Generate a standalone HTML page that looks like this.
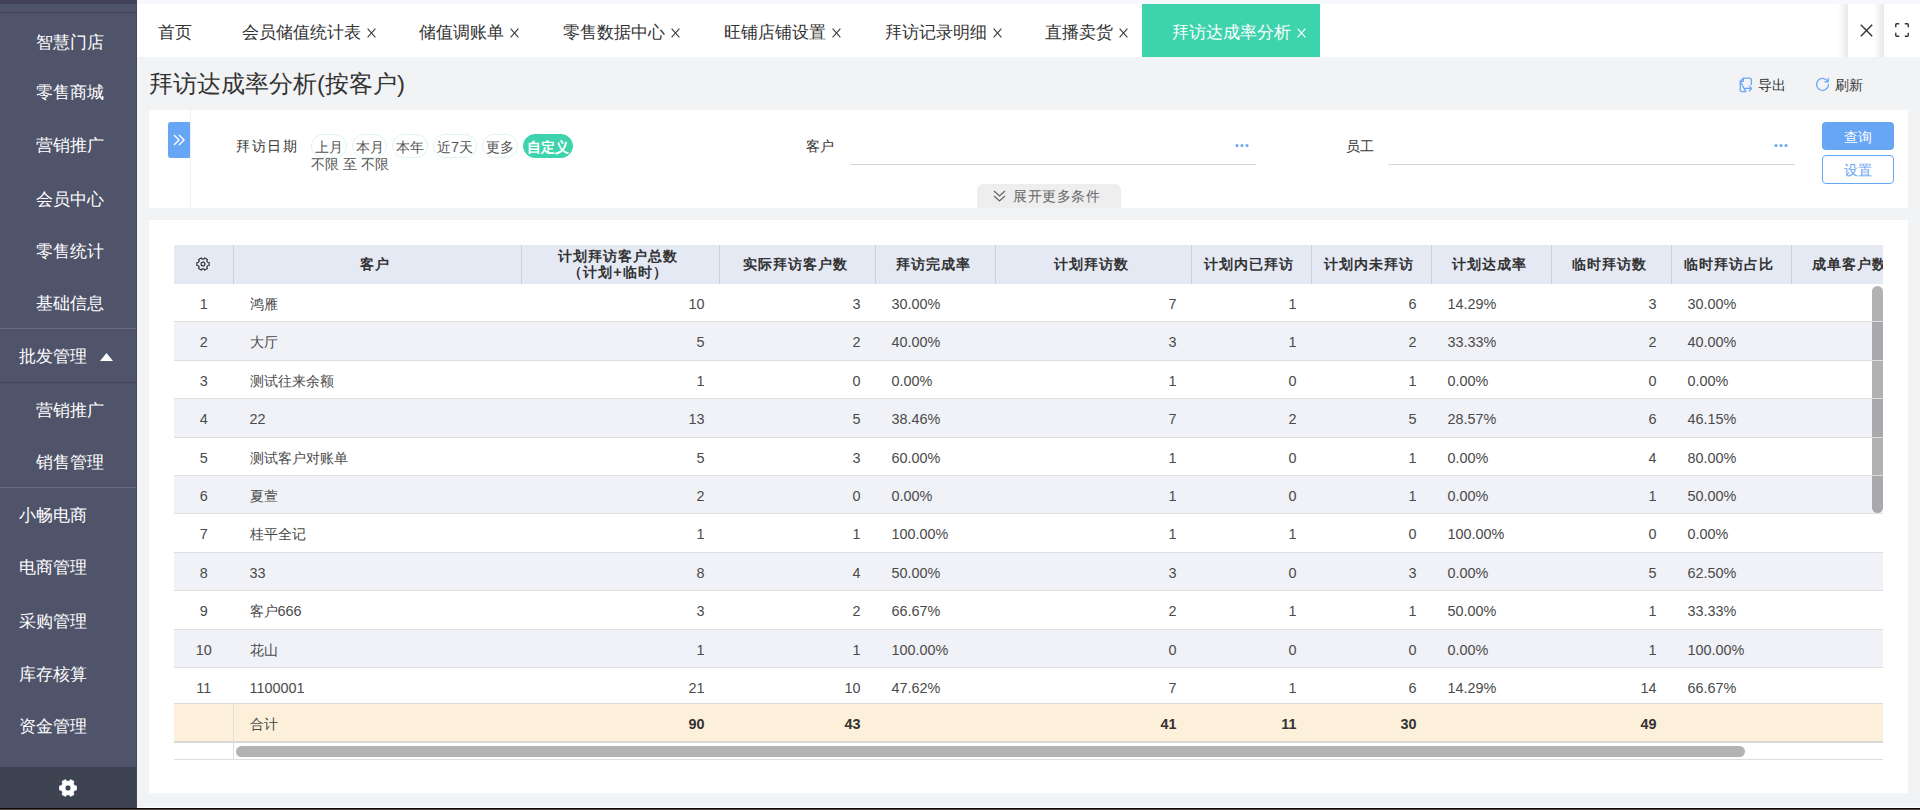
<!DOCTYPE html>
<html><head><meta charset="utf-8">
<style>
*{box-sizing:border-box;margin:0;padding:0}
html,body{width:1920px;height:810px;overflow:hidden;background:#f2f3f5;font-family:"Liberation Sans",sans-serif;color:#333}
.abs{position:absolute}
/* sidebar */
#side{position:absolute;left:0;top:0;width:137px;height:808px;background:#50546a}
#side .topband{position:absolute;left:0;top:0;width:137px;height:4px;background:#41425a}
#side .topline{position:absolute;left:0;top:12px;width:137px;height:1px;background:#3f4252}
#side .edge{position:absolute;left:136px;top:0;width:1px;height:808px;background:#454859}
.mi{position:absolute;color:#fff;font-size:16.8px;line-height:22px;white-space:nowrap;font-weight:500}
.sep{position:absolute;left:0;width:137px;height:1px}
#side .bottom{position:absolute;left:0;top:767px;width:137px;height:41px;background:#3e4352}
#btmline{position:absolute;left:0;top:808px;width:1920px;height:1px;background:#0a0a0a}
#btmline2{position:absolute;left:0;top:809px;width:1920px;height:1px;background:#4b463f}
#whiteline{position:absolute;left:137px;top:807px;width:1783px;height:1px;background:#fff}
/* tabs */
#topstrip{position:absolute;left:138px;top:0;width:1782px;height:4px;background:#f7f8fb}
#tabbar{position:absolute;left:137px;top:4px;width:1783px;height:53px;background:#fff}
.tab{position:absolute;top:4px;height:53px;line-height:57px;font-size:16.8px;color:#333;white-space:nowrap}
.tab .x{display:inline-block;width:9px;height:10px;margin-left:6px;vertical-align:0px}
.tab.active{background:#3dd3ad;color:#fff}
.gbtn{position:absolute;top:4px;width:36px;height:53px;background:#fff}
.gbtn::before{content:'';position:absolute;left:-10px;top:0;width:10px;height:53px;background:linear-gradient(to right,rgba(0,0,0,0),rgba(0,0,0,0.09))}
/* title */
#title{position:absolute;left:149px;top:69px;font-size:24px;line-height:30px;color:#333;white-space:nowrap}
.tool{position:absolute;top:75px;font-size:14.4px;line-height:20px;color:#333;white-space:nowrap}
/* filter card */
#fcard{position:absolute;left:149px;top:110px;width:1759px;height:98px;background:#fff}
#fdiv{position:absolute;left:190px;top:110px;width:1px;height:98px;background:#eef0f3}
#expbtn{position:absolute;left:168px;top:122px;width:22px;height:36px;background:#67a5f5;border-radius:3px 0 0 3px}
.lbl{position:absolute;font-size:14.4px;line-height:20px;color:#333;white-space:nowrap}
.pill{position:absolute;top:134px;height:24px;border:1px solid #dcf5ee;border-radius:12px;font-size:14.4px;line-height:24px;color:#555;text-align:center;white-space:nowrap}
.pill.on{background:#3dd3ad;border-color:#3dd3ad;color:#fff;font-weight:bold}
.uline{position:absolute;top:164px;height:1px;background:#d6d6d6}
.dots{position:absolute;top:143px;width:14px;height:5px}
.btn{position:absolute;left:1822px;width:72px;border-radius:4px;font-size:14.4px;text-align:center}
#moretab{position:absolute;left:977px;top:184px;width:144px;height:24px;background:#eeeeee;border-radius:6px 6px 0 0;font-size:14.4px;line-height:24px;color:#666;white-space:nowrap;letter-spacing:0.5px}
/* table card */
#tcard{position:absolute;left:149px;top:220px;width:1759px;height:573px;background:#fff}
.thead{position:absolute;left:174px;top:245px;width:1709px;height:38.5px;background:#e5e9f4;overflow:hidden}
.hc{position:absolute;top:245px;height:38.5px;line-height:38.5px;text-align:center;font-size:14.4px;font-weight:bold;color:#333;white-space:nowrap;border-right:1px solid #cdd0d6;letter-spacing:1px;padding-right:4px}
.hc.two{line-height:16px;padding-top:3px}
.tr{position:absolute;left:174px;width:1709px;background:#fff}
.rb{position:absolute;left:174px;width:1709px;height:1px;background:#dedede;z-index:1}
.tr.z{background:#f0f2f7}
.c{position:absolute;font-size:14.4px;color:#4a4a4a;white-space:nowrap;overflow:hidden}
.c.c{text-align:center}
.c.l{text-align:left;padding-left:16px}
.c.r{text-align:right;padding-right:15px}
.c.b{font-weight:bold;color:#333}
.sumrow{position:absolute;left:174px;top:702.8px;width:1709px;height:38.5px;background:#fdf0da;border-top:1px solid #dcdcdc}
#clip{position:absolute;left:0;top:0;width:1883px;height:810px;overflow:hidden}
</style></head><body>

<!-- sidebar -->
<div id="side">
  <div class="topband"></div>
  <div class="topline"></div>
  <div class="mi" style="left:36px;top:32px">智慧门店</div>
  <div class="mi" style="left:36px;top:82px">零售商城</div>
  <div class="mi" style="left:36px;top:135px">营销推广</div>
  <div class="mi" style="left:36px;top:189px">会员中心</div>
  <div class="mi" style="left:36px;top:241px">零售统计</div>
  <div class="mi" style="left:36px;top:293px">基础信息</div>
  <div class="sep" style="top:328px;background:#686c7e"></div>
  <div class="mi" style="left:19px;top:346px">批发管理</div>
  <svg class="abs" style="left:100px;top:352.5px" width="13" height="8" viewBox="0 0 13 8"><path d="M6.5 0 L13 8 L0 8 Z" fill="#fff"/></svg>
  <div class="sep" style="top:382px;background:#43465a"></div>
  <div class="mi" style="left:36px;top:400px">营销推广</div>
  <div class="mi" style="left:36px;top:452px">销售管理</div>
  <div class="sep" style="top:487px;background:#686c7e"></div>
  <div class="mi" style="left:19px;top:505px">小畅电商</div>
  <div class="mi" style="left:19px;top:557px">电商管理</div>
  <div class="mi" style="left:19px;top:611px">采购管理</div>
  <div class="mi" style="left:19px;top:664px">库存核算</div>
  <div class="mi" style="left:19px;top:716px">资金管理</div>
  <div class="bottom"></div>
  <svg class="abs" style="left:59px;top:779.4px" width="18" height="18" viewBox="0 0 18 18"><path fill="#fff" fill-rule="evenodd" stroke="#fff" stroke-width="0.6" stroke-linejoin="round" d="M15.40 6.42 L17.67 7.00 L17.67 11.00 L15.40 11.58 L14.44 13.25 L15.07 15.51 L11.60 17.51 L9.96 15.83 L8.04 15.83 L6.40 17.51 L2.93 15.51 L3.56 13.25 L2.60 11.58 L0.33 11.00 L0.33 7.00 L2.60 6.42 L3.56 4.75 L2.93 2.49 L6.40 0.49 L8.04 2.17 L9.96 2.17 L11.60 0.49 L15.07 2.49 L14.44 4.75Z M11.9 9 A2.9 2.9 0 1 0 11.9 9.01Z"/></svg>
  <div class="edge"></div>
</div>

<!-- tabs -->
<div id="topstrip"></div>
<div id="tabbar"></div>
<div class="tab" style="left:158px">首页</div>
<div class="tab" style="left:242px">会员储值统计表<svg class="x" viewBox="0 0 9 10"><path d="M0.6 0.6L8.4 9.4M8.4 0.6L0.6 9.4" stroke="#444" stroke-width="1.2"/></svg></div>
<div class="tab" style="left:419px">储值调账单<svg class="x" viewBox="0 0 9 10"><path d="M0.6 0.6L8.4 9.4M8.4 0.6L0.6 9.4" stroke="#444" stroke-width="1.2"/></svg></div>
<div class="tab" style="left:563px">零售数据中心<svg class="x" viewBox="0 0 9 10"><path d="M0.6 0.6L8.4 9.4M8.4 0.6L0.6 9.4" stroke="#444" stroke-width="1.2"/></svg></div>
<div class="tab" style="left:724px">旺铺店铺设置<svg class="x" viewBox="0 0 9 10"><path d="M0.6 0.6L8.4 9.4M8.4 0.6L0.6 9.4" stroke="#444" stroke-width="1.2"/></svg></div>
<div class="tab" style="left:885px">拜访记录明细<svg class="x" viewBox="0 0 9 10"><path d="M0.6 0.6L8.4 9.4M8.4 0.6L0.6 9.4" stroke="#444" stroke-width="1.2"/></svg></div>
<div class="tab" style="left:1045px">直播卖货<svg class="x" viewBox="0 0 9 10"><path d="M0.6 0.6L8.4 9.4M8.4 0.6L0.6 9.4" stroke="#444" stroke-width="1.2"/></svg></div>
<div class="tab active" style="left:1142px;width:178px;padding-left:30px">拜访达成率分析<svg class="x" viewBox="0 0 9 10"><path d="M0.6 0.6L8.4 9.4M8.4 0.6L0.6 9.4" stroke="#fff" stroke-width="1.2"/></svg></div>
<div class="gbtn" style="left:1848px"><svg class="abs" style="left:12px;top:20px" width="13" height="13" viewBox="0 0 13 13"><path d="M0.8 0.8L12.2 12.2M12.2 0.8L0.8 12.2" stroke="#333" stroke-width="1.4"/></svg></div>
<div class="gbtn" style="left:1884px"><svg class="abs" style="left:11px;top:19px" width="14" height="14" viewBox="0 0 15 15"><path d="M0.8 4.5V1.8a1 1 0 0 1 1-1H4.5 M10.5 0.8h2.7a1 1 0 0 1 1 1V4.5 M14.2 10.5v2.7a1 1 0 0 1-1 1H10.5 M4.5 14.2H1.8a1 1 0 0 1-1-1V10.5" fill="none" stroke="#333" stroke-width="1.5"/></svg></div>

<!-- title -->
<div id="title">拜访达成率分析(按客户)</div>
<svg class="abs" style="left:1739px;top:77px" width="14" height="16" viewBox="0 0 14 16"><path d="M4.3 1.2H10.6A1.8 1.8 0 0 1 12.4 3V7.6 M6.8 14.6H3A1.8 1.8 0 0 1 1.2 12.8V4.3Z M1.2 4.3L4.3 1.2V4.3Z M6 11.4H12.6 M10.4 9.1L12.7 11.4L10.4 13.7" fill="none" stroke="#6aa7f6" stroke-width="1.3" stroke-linejoin="round" stroke-linecap="round"/></svg>
<div class="tool" style="left:1758px;top:75px">导出</div>
<svg class="abs" style="left:1815px;top:77px" width="15" height="15" viewBox="0 0 15 15"><path d="M12.6 4.2A6 6 0 1 0 13.5 7.5" fill="none" stroke="#6aa7f6" stroke-width="1.3" stroke-linecap="round"/><path d="M13.2 1.3V4.8H9.8" fill="none" stroke="#6aa7f6" stroke-width="1.3" stroke-linecap="round" stroke-linejoin="round"/></svg>
<div class="tool" style="left:1835px;top:75px">刷新</div>

<!-- filter card -->
<div id="fcard"></div>
<div id="fdiv"></div>
<div id="expbtn"><svg class="abs" style="left:4px;top:11px" width="14" height="14" viewBox="0 0 14 14"><path d="M2 2L7 7L2 12M7 2L12 7L7 12" fill="none" stroke="#fff" stroke-width="1.4"/></svg></div>
<div class="lbl" style="left:236px;top:136px;letter-spacing:1.5px">拜访日期</div>
<div class="pill" style="left:311px;width:36px">上月</div>
<div class="pill" style="left:352px;width:35px">本月</div>
<div class="pill" style="left:392px;width:36px">本年</div>
<div class="pill" style="left:433px;width:44px">近7天</div>
<div class="pill" style="left:482px;width:36px">更多</div>
<div class="pill on" style="left:523px;width:50px">自定义</div>
<div class="lbl" style="left:311px;top:154px;color:#555">不限 至 不限</div>
<div class="lbl" style="left:806px;top:136px">客户</div>
<div class="uline" style="left:850px;width:406px"></div>
<svg class="dots" style="left:1235px" viewBox="0 0 14 5"><circle cx="2" cy="2.5" r="1.5" fill="#67a5f5"/><circle cx="7" cy="2.5" r="1.5" fill="#67a5f5"/><circle cx="12" cy="2.5" r="1.5" fill="#67a5f5"/></svg>
<div class="lbl" style="left:1346px;top:136px">员工</div>
<div class="uline" style="left:1388px;width:407px"></div>
<svg class="dots" style="left:1774px" viewBox="0 0 14 5"><circle cx="2" cy="2.5" r="1.5" fill="#67a5f5"/><circle cx="7" cy="2.5" r="1.5" fill="#67a5f5"/><circle cx="12" cy="2.5" r="1.5" fill="#67a5f5"/></svg>
<div class="btn" style="top:122px;height:28px;line-height:30px;background:#67a5f5;color:#fff">查询</div>
<div class="btn" style="top:155px;height:29px;line-height:29px;border:1px solid #67a5f5;color:#67a5f5;background:#fff">设置</div>
<div id="moretab"><svg class="abs" style="left:16px;top:6px" width="13" height="12" viewBox="0 0 13 12"><path d="M1 1L6.5 6L12 1M1 6L6.5 11L12 6" fill="none" stroke="#666" stroke-width="1.2"/></svg><span class="abs" style="left:36px;top:0">展开更多条件</span></div>

<!-- table card -->
<div id="tcard"></div>
<div id="clip">
<div class="thead"></div><div class="hc" style="left:174px;width:59.5px"></div><svg style="position:absolute;left:195.2px;top:255.8px" width="16" height="16" viewBox="0 0 16 16"><path d="M12.57 6.24 L14.11 6.48 L14.11 9.52 L12.57 9.76 L11.81 11.08 L12.38 12.53 L9.74 14.06 L8.77 12.84 L7.23 12.84 L6.26 14.06 L3.62 12.53 L4.19 11.08 L3.43 9.76 L1.89 9.52 L1.89 6.48 L3.43 6.24 L4.19 4.92 L3.62 3.47 L6.26 1.94 L7.23 3.16 L8.77 3.16 L9.74 1.94 L12.38 3.47 L11.81 4.92Z" fill="none" stroke="#333" stroke-width="1.2" stroke-linejoin="round"/><circle cx="8" cy="8" r="1.9" fill="none" stroke="#333" stroke-width="1.2"/></svg><div class="hc" style="left:233.5px;width:288.0px">客户</div><div class="hc two" style="left:521.5px;width:198.0px">计划拜访客户总数<br>（计划+临时）</div><div class="hc" style="left:719.5px;width:156.0px">实际拜访客户数</div><div class="hc" style="left:875.5px;width:120.0px">拜访完成率</div><div class="hc" style="left:995.5px;width:196.0px">计划拜访数</div><div class="hc" style="left:1191.5px;width:120.0px">计划内已拜访</div><div class="hc" style="left:1311.5px;width:120.0px">计划内未拜访</div><div class="hc" style="left:1431.5px;width:120.0px">计划达成率</div><div class="hc" style="left:1551.5px;width:120.0px">临时拜访数</div><div class="hc" style="left:1671.5px;width:120.0px">临时拜访占比</div><div class="hc" style="left:1791.5px;width:120.0px">成单客户数</div>
<div class="tr " style="top:283.5px;height:38.4px"></div><div class="rb" style="top:321.4px"></div><div class="c c " style="left:174px;width:59.5px;top:285.0px;height:38.4px;line-height:38.4px">1</div><div class="c l " style="left:233.5px;width:288.0px;top:285.0px;height:38.4px;line-height:38.4px">鸿雁</div><div class="c r " style="left:521.5px;width:198.0px;top:285.0px;height:38.4px;line-height:38.4px">10</div><div class="c r " style="left:719.5px;width:156.0px;top:285.0px;height:38.4px;line-height:38.4px">3</div><div class="c l " style="left:875.5px;width:120.0px;top:285.0px;height:38.4px;line-height:38.4px">30.00%</div><div class="c r " style="left:995.5px;width:196.0px;top:285.0px;height:38.4px;line-height:38.4px">7</div><div class="c r " style="left:1191.5px;width:120.0px;top:285.0px;height:38.4px;line-height:38.4px">1</div><div class="c r " style="left:1311.5px;width:120.0px;top:285.0px;height:38.4px;line-height:38.4px">6</div><div class="c l " style="left:1431.5px;width:120.0px;top:285.0px;height:38.4px;line-height:38.4px">14.29%</div><div class="c r " style="left:1551.5px;width:120.0px;top:285.0px;height:38.4px;line-height:38.4px">3</div><div class="c l " style="left:1671.5px;width:120.0px;top:285.0px;height:38.4px;line-height:38.4px">30.00%</div><div class="tr z" style="top:321.9px;height:38.4px"></div><div class="rb" style="top:359.8px"></div><div class="c c " style="left:174px;width:59.5px;top:323.4px;height:38.4px;line-height:38.4px">2</div><div class="c l " style="left:233.5px;width:288.0px;top:323.4px;height:38.4px;line-height:38.4px">大厅</div><div class="c r " style="left:521.5px;width:198.0px;top:323.4px;height:38.4px;line-height:38.4px">5</div><div class="c r " style="left:719.5px;width:156.0px;top:323.4px;height:38.4px;line-height:38.4px">2</div><div class="c l " style="left:875.5px;width:120.0px;top:323.4px;height:38.4px;line-height:38.4px">40.00%</div><div class="c r " style="left:995.5px;width:196.0px;top:323.4px;height:38.4px;line-height:38.4px">3</div><div class="c r " style="left:1191.5px;width:120.0px;top:323.4px;height:38.4px;line-height:38.4px">1</div><div class="c r " style="left:1311.5px;width:120.0px;top:323.4px;height:38.4px;line-height:38.4px">2</div><div class="c l " style="left:1431.5px;width:120.0px;top:323.4px;height:38.4px;line-height:38.4px">33.33%</div><div class="c r " style="left:1551.5px;width:120.0px;top:323.4px;height:38.4px;line-height:38.4px">2</div><div class="c l " style="left:1671.5px;width:120.0px;top:323.4px;height:38.4px;line-height:38.4px">40.00%</div><div class="tr " style="top:360.3px;height:38.4px"></div><div class="rb" style="top:398.2px"></div><div class="c c " style="left:174px;width:59.5px;top:361.8px;height:38.4px;line-height:38.4px">3</div><div class="c l " style="left:233.5px;width:288.0px;top:361.8px;height:38.4px;line-height:38.4px">测试往来余额</div><div class="c r " style="left:521.5px;width:198.0px;top:361.8px;height:38.4px;line-height:38.4px">1</div><div class="c r " style="left:719.5px;width:156.0px;top:361.8px;height:38.4px;line-height:38.4px">0</div><div class="c l " style="left:875.5px;width:120.0px;top:361.8px;height:38.4px;line-height:38.4px">0.00%</div><div class="c r " style="left:995.5px;width:196.0px;top:361.8px;height:38.4px;line-height:38.4px">1</div><div class="c r " style="left:1191.5px;width:120.0px;top:361.8px;height:38.4px;line-height:38.4px">0</div><div class="c r " style="left:1311.5px;width:120.0px;top:361.8px;height:38.4px;line-height:38.4px">1</div><div class="c l " style="left:1431.5px;width:120.0px;top:361.8px;height:38.4px;line-height:38.4px">0.00%</div><div class="c r " style="left:1551.5px;width:120.0px;top:361.8px;height:38.4px;line-height:38.4px">0</div><div class="c l " style="left:1671.5px;width:120.0px;top:361.8px;height:38.4px;line-height:38.4px">0.00%</div><div class="tr z" style="top:398.7px;height:38.4px"></div><div class="rb" style="top:436.6px"></div><div class="c c " style="left:174px;width:59.5px;top:400.2px;height:38.4px;line-height:38.4px">4</div><div class="c l " style="left:233.5px;width:288.0px;top:400.2px;height:38.4px;line-height:38.4px">22</div><div class="c r " style="left:521.5px;width:198.0px;top:400.2px;height:38.4px;line-height:38.4px">13</div><div class="c r " style="left:719.5px;width:156.0px;top:400.2px;height:38.4px;line-height:38.4px">5</div><div class="c l " style="left:875.5px;width:120.0px;top:400.2px;height:38.4px;line-height:38.4px">38.46%</div><div class="c r " style="left:995.5px;width:196.0px;top:400.2px;height:38.4px;line-height:38.4px">7</div><div class="c r " style="left:1191.5px;width:120.0px;top:400.2px;height:38.4px;line-height:38.4px">2</div><div class="c r " style="left:1311.5px;width:120.0px;top:400.2px;height:38.4px;line-height:38.4px">5</div><div class="c l " style="left:1431.5px;width:120.0px;top:400.2px;height:38.4px;line-height:38.4px">28.57%</div><div class="c r " style="left:1551.5px;width:120.0px;top:400.2px;height:38.4px;line-height:38.4px">6</div><div class="c l " style="left:1671.5px;width:120.0px;top:400.2px;height:38.4px;line-height:38.4px">46.15%</div><div class="tr " style="top:437.1px;height:38.4px"></div><div class="rb" style="top:475.0px"></div><div class="c c " style="left:174px;width:59.5px;top:438.6px;height:38.4px;line-height:38.4px">5</div><div class="c l " style="left:233.5px;width:288.0px;top:438.6px;height:38.4px;line-height:38.4px">测试客户对账单</div><div class="c r " style="left:521.5px;width:198.0px;top:438.6px;height:38.4px;line-height:38.4px">5</div><div class="c r " style="left:719.5px;width:156.0px;top:438.6px;height:38.4px;line-height:38.4px">3</div><div class="c l " style="left:875.5px;width:120.0px;top:438.6px;height:38.4px;line-height:38.4px">60.00%</div><div class="c r " style="left:995.5px;width:196.0px;top:438.6px;height:38.4px;line-height:38.4px">1</div><div class="c r " style="left:1191.5px;width:120.0px;top:438.6px;height:38.4px;line-height:38.4px">0</div><div class="c r " style="left:1311.5px;width:120.0px;top:438.6px;height:38.4px;line-height:38.4px">1</div><div class="c l " style="left:1431.5px;width:120.0px;top:438.6px;height:38.4px;line-height:38.4px">0.00%</div><div class="c r " style="left:1551.5px;width:120.0px;top:438.6px;height:38.4px;line-height:38.4px">4</div><div class="c l " style="left:1671.5px;width:120.0px;top:438.6px;height:38.4px;line-height:38.4px">80.00%</div><div class="tr z" style="top:475.5px;height:38.4px"></div><div class="rb" style="top:513.4px"></div><div class="c c " style="left:174px;width:59.5px;top:477.0px;height:38.4px;line-height:38.4px">6</div><div class="c l " style="left:233.5px;width:288.0px;top:477.0px;height:38.4px;line-height:38.4px">夏萱</div><div class="c r " style="left:521.5px;width:198.0px;top:477.0px;height:38.4px;line-height:38.4px">2</div><div class="c r " style="left:719.5px;width:156.0px;top:477.0px;height:38.4px;line-height:38.4px">0</div><div class="c l " style="left:875.5px;width:120.0px;top:477.0px;height:38.4px;line-height:38.4px">0.00%</div><div class="c r " style="left:995.5px;width:196.0px;top:477.0px;height:38.4px;line-height:38.4px">1</div><div class="c r " style="left:1191.5px;width:120.0px;top:477.0px;height:38.4px;line-height:38.4px">0</div><div class="c r " style="left:1311.5px;width:120.0px;top:477.0px;height:38.4px;line-height:38.4px">1</div><div class="c l " style="left:1431.5px;width:120.0px;top:477.0px;height:38.4px;line-height:38.4px">0.00%</div><div class="c r " style="left:1551.5px;width:120.0px;top:477.0px;height:38.4px;line-height:38.4px">1</div><div class="c l " style="left:1671.5px;width:120.0px;top:477.0px;height:38.4px;line-height:38.4px">50.00%</div><div class="tr " style="top:513.9px;height:38.4px"></div><div class="rb" style="top:551.8px"></div><div class="c c " style="left:174px;width:59.5px;top:515.4px;height:38.4px;line-height:38.4px">7</div><div class="c l " style="left:233.5px;width:288.0px;top:515.4px;height:38.4px;line-height:38.4px">桂平全记</div><div class="c r " style="left:521.5px;width:198.0px;top:515.4px;height:38.4px;line-height:38.4px">1</div><div class="c r " style="left:719.5px;width:156.0px;top:515.4px;height:38.4px;line-height:38.4px">1</div><div class="c l " style="left:875.5px;width:120.0px;top:515.4px;height:38.4px;line-height:38.4px">100.00%</div><div class="c r " style="left:995.5px;width:196.0px;top:515.4px;height:38.4px;line-height:38.4px">1</div><div class="c r " style="left:1191.5px;width:120.0px;top:515.4px;height:38.4px;line-height:38.4px">1</div><div class="c r " style="left:1311.5px;width:120.0px;top:515.4px;height:38.4px;line-height:38.4px">0</div><div class="c l " style="left:1431.5px;width:120.0px;top:515.4px;height:38.4px;line-height:38.4px">100.00%</div><div class="c r " style="left:1551.5px;width:120.0px;top:515.4px;height:38.4px;line-height:38.4px">0</div><div class="c l " style="left:1671.5px;width:120.0px;top:515.4px;height:38.4px;line-height:38.4px">0.00%</div><div class="tr z" style="top:552.3px;height:38.4px"></div><div class="rb" style="top:590.2px"></div><div class="c c " style="left:174px;width:59.5px;top:553.8px;height:38.4px;line-height:38.4px">8</div><div class="c l " style="left:233.5px;width:288.0px;top:553.8px;height:38.4px;line-height:38.4px">33</div><div class="c r " style="left:521.5px;width:198.0px;top:553.8px;height:38.4px;line-height:38.4px">8</div><div class="c r " style="left:719.5px;width:156.0px;top:553.8px;height:38.4px;line-height:38.4px">4</div><div class="c l " style="left:875.5px;width:120.0px;top:553.8px;height:38.4px;line-height:38.4px">50.00%</div><div class="c r " style="left:995.5px;width:196.0px;top:553.8px;height:38.4px;line-height:38.4px">3</div><div class="c r " style="left:1191.5px;width:120.0px;top:553.8px;height:38.4px;line-height:38.4px">0</div><div class="c r " style="left:1311.5px;width:120.0px;top:553.8px;height:38.4px;line-height:38.4px">3</div><div class="c l " style="left:1431.5px;width:120.0px;top:553.8px;height:38.4px;line-height:38.4px">0.00%</div><div class="c r " style="left:1551.5px;width:120.0px;top:553.8px;height:38.4px;line-height:38.4px">5</div><div class="c l " style="left:1671.5px;width:120.0px;top:553.8px;height:38.4px;line-height:38.4px">62.50%</div><div class="tr " style="top:590.7px;height:38.4px"></div><div class="rb" style="top:628.6px"></div><div class="c c " style="left:174px;width:59.5px;top:592.2px;height:38.4px;line-height:38.4px">9</div><div class="c l " style="left:233.5px;width:288.0px;top:592.2px;height:38.4px;line-height:38.4px">客户666</div><div class="c r " style="left:521.5px;width:198.0px;top:592.2px;height:38.4px;line-height:38.4px">3</div><div class="c r " style="left:719.5px;width:156.0px;top:592.2px;height:38.4px;line-height:38.4px">2</div><div class="c l " style="left:875.5px;width:120.0px;top:592.2px;height:38.4px;line-height:38.4px">66.67%</div><div class="c r " style="left:995.5px;width:196.0px;top:592.2px;height:38.4px;line-height:38.4px">2</div><div class="c r " style="left:1191.5px;width:120.0px;top:592.2px;height:38.4px;line-height:38.4px">1</div><div class="c r " style="left:1311.5px;width:120.0px;top:592.2px;height:38.4px;line-height:38.4px">1</div><div class="c l " style="left:1431.5px;width:120.0px;top:592.2px;height:38.4px;line-height:38.4px">50.00%</div><div class="c r " style="left:1551.5px;width:120.0px;top:592.2px;height:38.4px;line-height:38.4px">1</div><div class="c l " style="left:1671.5px;width:120.0px;top:592.2px;height:38.4px;line-height:38.4px">33.33%</div><div class="tr z" style="top:629.0999999999999px;height:38.4px"></div><div class="rb" style="top:667.0px"></div><div class="c c " style="left:174px;width:59.5px;top:630.5999999999999px;height:38.4px;line-height:38.4px">10</div><div class="c l " style="left:233.5px;width:288.0px;top:630.5999999999999px;height:38.4px;line-height:38.4px">花山</div><div class="c r " style="left:521.5px;width:198.0px;top:630.5999999999999px;height:38.4px;line-height:38.4px">1</div><div class="c r " style="left:719.5px;width:156.0px;top:630.5999999999999px;height:38.4px;line-height:38.4px">1</div><div class="c l " style="left:875.5px;width:120.0px;top:630.5999999999999px;height:38.4px;line-height:38.4px">100.00%</div><div class="c r " style="left:995.5px;width:196.0px;top:630.5999999999999px;height:38.4px;line-height:38.4px">0</div><div class="c r " style="left:1191.5px;width:120.0px;top:630.5999999999999px;height:38.4px;line-height:38.4px">0</div><div class="c r " style="left:1311.5px;width:120.0px;top:630.5999999999999px;height:38.4px;line-height:38.4px">0</div><div class="c l " style="left:1431.5px;width:120.0px;top:630.5999999999999px;height:38.4px;line-height:38.4px">0.00%</div><div class="c r " style="left:1551.5px;width:120.0px;top:630.5999999999999px;height:38.4px;line-height:38.4px">1</div><div class="c l " style="left:1671.5px;width:120.0px;top:630.5999999999999px;height:38.4px;line-height:38.4px">100.00%</div><div class="tr " style="top:667.5px;height:35.3px"></div><div class="c c " style="left:174px;width:59.5px;top:669.0px;height:38.4px;line-height:38.4px">11</div><div class="c l " style="left:233.5px;width:288.0px;top:669.0px;height:38.4px;line-height:38.4px">1100001</div><div class="c r " style="left:521.5px;width:198.0px;top:669.0px;height:38.4px;line-height:38.4px">21</div><div class="c r " style="left:719.5px;width:156.0px;top:669.0px;height:38.4px;line-height:38.4px">10</div><div class="c l " style="left:875.5px;width:120.0px;top:669.0px;height:38.4px;line-height:38.4px">47.62%</div><div class="c r " style="left:995.5px;width:196.0px;top:669.0px;height:38.4px;line-height:38.4px">7</div><div class="c r " style="left:1191.5px;width:120.0px;top:669.0px;height:38.4px;line-height:38.4px">1</div><div class="c r " style="left:1311.5px;width:120.0px;top:669.0px;height:38.4px;line-height:38.4px">6</div><div class="c l " style="left:1431.5px;width:120.0px;top:669.0px;height:38.4px;line-height:38.4px">14.29%</div><div class="c r " style="left:1551.5px;width:120.0px;top:669.0px;height:38.4px;line-height:38.4px">14</div><div class="c l " style="left:1671.5px;width:120.0px;top:669.0px;height:38.4px;line-height:38.4px">66.67%</div>
<div class="sumrow"></div><div class="c l " style="left:233.5px;width:288.0px;top:704.5px;height:38.5px;line-height:38.5px">合计</div><div class="c r b" style="left:521.5px;width:198.0px;top:704.5px;height:38.5px;line-height:38.5px">90</div><div class="c r b" style="left:719.5px;width:156.0px;top:704.5px;height:38.5px;line-height:38.5px">43</div><div class="c r b" style="left:995.5px;width:196.0px;top:704.5px;height:38.5px;line-height:38.5px">41</div><div class="c r b" style="left:1191.5px;width:120.0px;top:704.5px;height:38.5px;line-height:38.5px">11</div><div class="c r b" style="left:1311.5px;width:120.0px;top:704.5px;height:38.5px;line-height:38.5px">30</div><div class="c r b" style="left:1551.5px;width:120.0px;top:704.5px;height:38.5px;line-height:38.5px">49</div>
</div>
<div class="abs" style="left:174px;top:741px;width:1709px;height:1.5px;background:#d8d8d8"></div>
<div class="abs" style="left:233px;top:704px;width:1px;height:55px;background:#dedede;z-index:2"></div>
<div class="abs" style="left:236px;top:746px;width:1509px;height:11px;border-radius:6px;background:#b3b3b3"></div>
<div class="abs" style="left:174px;top:759px;width:1709px;height:1px;background:#dedede"></div>
<div class="abs" style="left:1872px;top:286px;width:11px;height:227px;border-radius:6px;background:rgba(0,0,0,0.3)"></div>

<div id="whiteline"></div><div id="btmline"></div><div id="btmline2"></div>
</body></html>
